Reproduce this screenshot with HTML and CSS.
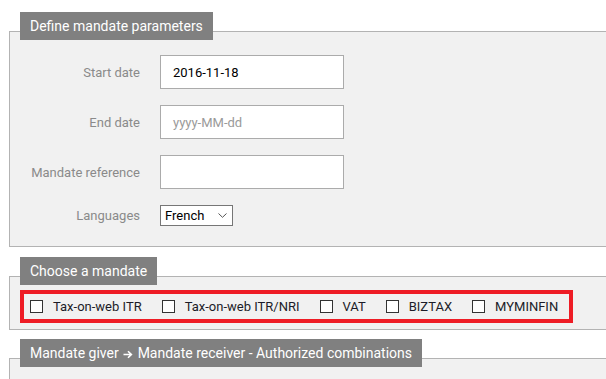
FILE: index.html
```html
<!DOCTYPE html>
<html>
<head>
<meta charset="utf-8">
<link rel="stylesheet" href="styles.css">
</head>
<body>
<div class="panel panel-params">
  <div class="panel-title">Define mandate parameters</div>
  <div class="form">
    <div class="row">
      <label class="label">Start date</label>
      <div class="input">2016-11-18</div>
    </div>
    <div class="row">
      <label class="label">End date</label>
      <div class="input placeholder">yyyy-MM-dd</div>
    </div>
    <div class="row">
      <label class="label">Mandate reference</label>
      <div class="input"></div>
    </div>
    <div class="row">
      <label class="label">Languages</label>
      <div class="select">
        <span class="select-text">French</span>
        <svg class="chevron" width="9" height="5" viewBox="0 0 9 5"><path d="M0.5 0.5 L4.5 4.3 L8.5 0.5" fill="none" stroke="#555" stroke-width="1"/></svg>
      </div>
    </div>
  </div>
</div>

<div class="panel panel-mandate">
  <div class="panel-title">Choose a mandate</div>
  <div class="mandates">
    <div class="item"><span class="box"></span><span class="item-text">Tax-on-web ITR</span></div>
    <div class="item"><span class="box"></span><span class="item-text">Tax-on-web ITR/NRI</span></div>
    <div class="item"><span class="box"></span><span class="item-text">VAT</span></div>
    <div class="item"><span class="box"></span><span class="item-text">BIZTAX</span></div>
    <div class="item"><span class="box"></span><span class="item-text">MYMINFIN</span></div>
  </div>
</div>

<div class="panel panel-combos">
  <div class="panel-title">Mandate giver <svg class="arrow" width="10" height="9" viewBox="0 0 10 9"><path d="M0.5 4.5 H8.2 M5 1.2 L8.4 4.5 L5 7.8" fill="none" stroke="#fff" stroke-width="1.6"/></svg> Mandate receiver - Authorized combinations</div>
</div>
</body>
</html>
```
FILE: styles.css
```css
html, body {
  margin: 0;
  padding: 0;
  background: #fff;
  overflow: hidden;
  font-family: Roboto, "Liberation Sans", sans-serif;
}
body {
  padding-top: 31px;
  height: 348px;
}
.panel {
  border: 1px solid #b3b3b3;
  border-right: none;
  background: #f1f1f1;
  margin: 0 0 0 9px;
}
.panel-title {
  width: fit-content;
  margin: -20px 0 0 10px;
  height: 28px;
  line-height: 28px;
  padding: 0 10px;
  background: #808080;
  color: #fff;
  font-size: 14px;
  white-space: nowrap;
}
.form {
  display: flex;
  flex-direction: column;
  gap: 16px;
  padding: 15px 0 20px 0;
}
.row {
  display: flex;
  align-items: center;
  gap: 20px;
}
.label {
  width: 130px;
  text-align: right;
  color: #8a8a8a;
  font-size: 13px;
}
.input {
  box-sizing: border-box;
  width: 184px;
  height: 34px;
  border: 1px solid #ababab;
  background: #fff;
  padding: 0 12px;
  display: flex;
  align-items: center;
  font-size: 13px;
  color: #000;
}
.input.placeholder {
  color: #9a9a9a;
}
.select {
  box-sizing: border-box;
  width: 73px;
  height: 21px;
  border: 1px solid #767676;
  background: #fff;
  display: flex;
  align-items: center;
  justify-content: space-between;
  padding: 0 5px 0 4px;
  font-size: 13px;
  color: #000;
}
.chevron {
  display: block;
}
.panel-mandate {
  margin-top: 29px;
}
.mandates {
  box-sizing: border-box;
  width: 553px;
  height: 33px;
  margin: 5px 0 6px 10px;
  border: 4px solid #ee1c25;
  display: flex;
  align-items: center;
  gap: 20px;
  padding: 0 6px;
}
.item {
  display: flex;
  align-items: center;
  gap: 10px;
}
.box {
  box-sizing: border-box;
  width: 13px;
  height: 13px;
  border: 1px solid #333;
  background: #fff;
}
.item-text {
  font-size: 13px;
  color: #1c1c28;
}
.panel-combos {
  margin-top: 28px;
  height: 20px;
  border-bottom: none;
}
.arrow {
  vertical-align: -0.5px;
  margin: 0 1px;
}
```
